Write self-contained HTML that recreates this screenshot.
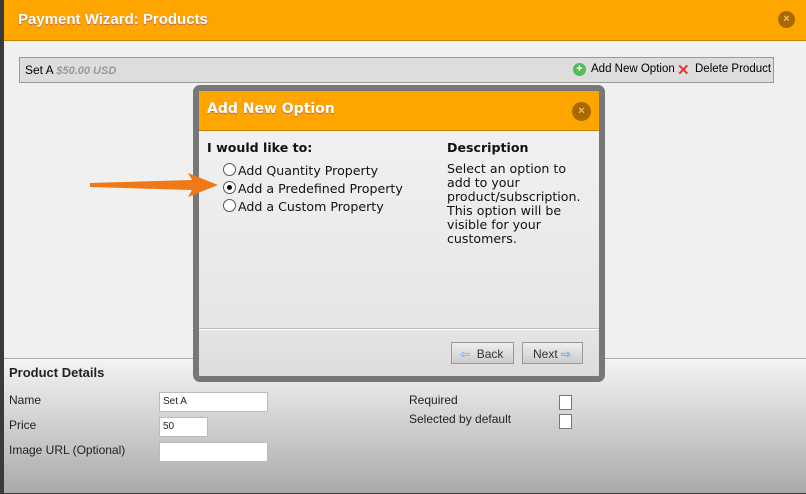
<!DOCTYPE html><html><head><style>
body{margin:0;width:806px;height:494px;background:#3a3a3a;position:relative;overflow:hidden;font-family:"DejaVu Sans",Verdana,sans-serif}
.win{position:absolute;left:4px;top:0;width:802px;height:492px;background:#f0f0f0}
.hd{position:absolute;left:0;top:0;width:802px;height:40px;background:#ffa500;border-bottom:1px solid #c98200}
.hd span{position:absolute;left:14px;top:11px;color:#fff;font:bold 15px "Liberation Sans",sans-serif;text-shadow:0 1px 1px #a66}
.x{position:absolute;width:17px;height:17px;border-radius:50%;background:#a86a00;color:#f5c060;font:bold 11px sans-serif;text-align:center;line-height:17px}
.bar{position:absolute;left:15px;top:57px;width:753px;height:24px;background:#ddd;border:1px solid #999;font:12px "Liberation Sans",sans-serif;white-space:nowrap}
.low{position:absolute;left:0;top:358px;width:802px;height:134px;border-top:1px solid #aaa;background:linear-gradient(#f4f4f4,#aaa);font:12px "Liberation Sans",sans-serif;color:#222}
.low .t{position:absolute}
.inp{position:absolute;background:#fff;border:1px solid #bbb;font:10px "Liberation Sans",sans-serif;padding:0 0 0 3px;line-height:18px;box-sizing:border-box}
.cb{position:absolute;width:11px;height:13px;background:#fff;border:1px solid #777}
.dlg{position:absolute;left:193px;top:85px;width:400px;height:285px;border:6px solid #777;border-radius:7px;background:linear-gradient(#f3f3f3 0%,#e6e6e6 80%,#ddd)}
.dh{position:absolute;left:0;top:0;width:400px;height:39px;background:#ffa500;border-bottom:1px solid #c98200}
.dh span{position:absolute;left:8px;top:10px;color:#fff;font:bold 14px "DejaVu Sans",sans-serif;text-shadow:0 1px 1px #a66}
.d{position:absolute;font-size:12.6px;color:#111;white-space:nowrap}
.rad{position:absolute;width:11px;height:11px;border:1px solid #555;border-radius:50%;background:#fff}
.btn{position:absolute;top:251px;height:22px;border:1px solid #999;background:linear-gradient(#eee,#ccc);font:12px "Liberation Sans",sans-serif;color:#333;line-height:22px;box-sizing:border-box}
</style></head><body>
<div class="win">
<div class="hd"><span>Payment Wizard: Products</span><div class="x" style="left:774px;top:11px">×</div></div>
<div class="bar"><span style="position:absolute;left:5px;top:5px">Set A <i style="color:#999;font-weight:bold;font-size:11px">$50.00 USD</i></span>
<span style="position:absolute;left:553px;top:5px;width:13px;height:13px;border-radius:50%;background:#5b5;color:#fff;font:bold 11px sans-serif;text-align:center;line-height:13px">+</span>
<span style="position:absolute;left:571px;top:5px;font-size:11.5px">Add New Option</span>
<span style="position:absolute;left:657px;top:3px;color:#e33;font:bold 15px sans-serif">✕</span>
<span style="position:absolute;left:675px;top:5px;font-size:11.5px">Delete Product</span></div>
<div class="low">
<div class="t" style="left:5px;top:6px;font-weight:bold;font-size:13px">Product Details</div>
<div class="t" style="left:5px;top:34px">Name</div><div class="inp" style="left:155px;top:33px;width:109px;height:20px">Set A</div>
<div class="t" style="left:5px;top:59px">Price</div><div class="inp" style="left:155px;top:58px;width:49px;height:20px">50</div>
<div class="t" style="left:5px;top:84px">Image URL (Optional)</div><div class="inp" style="left:155px;top:83px;width:109px;height:20px"></div>
<div class="t" style="left:405px;top:34px">Required</div><div class="cb" style="left:555px;top:36px"></div>
<div class="t" style="left:405px;top:53px">Selected by default</div><div class="cb" style="left:555px;top:55px"></div>
</div>
</div>
<div class="dlg">
<div class="dh"><span>Add New Option</span><div class="x" style="left:373px;top:11px;width:19px;height:19px;line-height:19px">×</div></div>
<div class="d" style="left:8px;top:49px;font-weight:bold">I would like to:</div>
<div class="d" style="left:248px;top:49px;font-weight:bold">Description</div>
<div class="rad" style="left:24px;top:72px"></div><div class="d" style="left:39px;top:72px">Add Quantity Property</div>
<div class="rad" style="left:24px;top:90px"><div style="position:absolute;left:3px;top:3px;width:5px;height:5px;border-radius:50%;background:#111"></div></div><div class="d" style="left:39px;top:90px">Add a Predefined Property</div>
<div class="rad" style="left:24px;top:108px"></div><div class="d" style="left:39px;top:108px">Add a Custom Property</div>
<div class="d" style="left:248px;top:71px;line-height:14px;width:140px;white-space:normal">Select an option to add to your product/subscription. This option will be visible for your customers.</div>
<div style="position:absolute;left:0;top:237px;width:400px;border-top:1px solid #bbb;border-bottom:1px solid #fff"></div>
<div class="btn" style="left:252px;width:63px;padding-left:8px"><span style="color:#6af">⇦</span>&nbsp; Back</div>
<div class="btn" style="left:323px;width:61px;padding-left:10px">Next <span style="color:#39e">⇨</span></div>
</div>
<svg style="position:absolute;left:88px;top:172px" width="132" height="26"><path d="M2 11 L104 8 L100 1 L130 13 L100 25 L104 18 L2 15Z" fill="#f07818"/></svg>
</body></html>
